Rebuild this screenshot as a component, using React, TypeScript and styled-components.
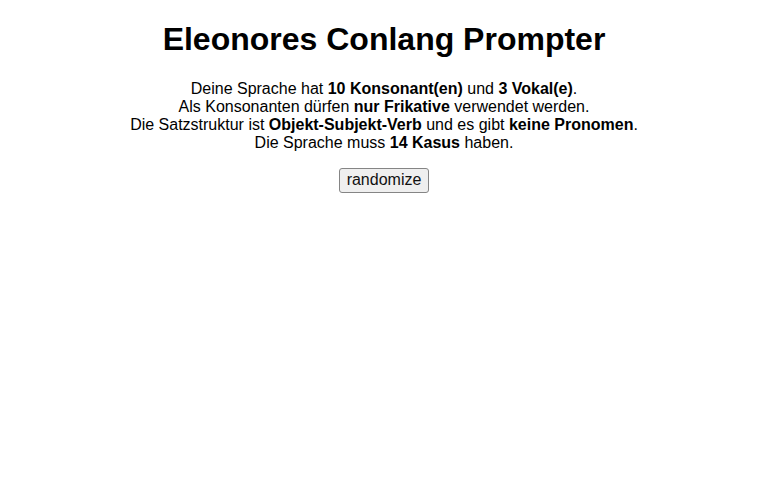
import React, { useState } from 'react';
import styled, { createGlobalStyle } from 'styled-components';

const GlobalStyle = createGlobalStyle`
  body {
    margin: 8px;
    background: #ffffff;
    color: #000000;
    font-family: "Liberation Sans", Arial, sans-serif;
  }
`;

const Container = styled.div`
  text-align: center;
`;

const Heading = styled.h1`
  font-size: 32px;
  font-weight: bold;
  margin: 13.44px 0 21.44px;
`;

const Prompt = styled.p`
  font-size: 16px;
  margin: 16px 0;
`;

const Line = styled.span`
  display: block;
`;

const RandomizeButton = styled.button`
  font-family: "Liberation Sans", Arial, sans-serif;
  font-size: 16px;
  color: #111111;
  background-color: #efefef;
  border: 1px solid #858585;
  border-radius: 3px;
  padding: 2px 7px 3px;
  cursor: pointer;
  &:hover {
    background-color: #e5e5e5;
  }
`;

const consonantTypes = ['nur Frikative', 'nur Plosive', 'nur Nasale', 'keine Frikative'];
const wordOrders = ['Subjekt-Verb-Objekt', 'Subjekt-Objekt-Verb', 'Verb-Subjekt-Objekt', 'Objekt-Subjekt-Verb'];
const pronounRules = ['keine Pronomen', 'nur ein Pronomen', 'zwölf Pronomen'];

const pick = <T,>(list: T[]) => list[Math.floor(Math.random() * list.length)];

const App = () => {
  const [prompt, setPrompt] = useState({
    consonants: 10,
    vowels: 3,
    consonantType: 'nur Frikative',
    wordOrder: 'Objekt-Subjekt-Verb',
    pronouns: 'keine Pronomen',
    cases: 14,
  });

  const randomize = () => {
    setPrompt({
      consonants: 5 + Math.floor(Math.random() * 20),
      vowels: 2 + Math.floor(Math.random() * 8),
      consonantType: pick(consonantTypes),
      wordOrder: pick(wordOrders),
      pronouns: pick(pronounRules),
      cases: Math.floor(Math.random() * 20),
    });
  };

  return (
    <Container>
      <GlobalStyle />
      <Heading>Eleonores Conlang Prompter</Heading>
      <Prompt>
        <Line>
          Deine Sprache hat <b>{prompt.consonants} Konsonant(en)</b> und <b>{prompt.vowels} Vokal(e)</b>.
        </Line>
        <Line>
          Als Konsonanten dürfen <b>{prompt.consonantType}</b> verwendet werden.
        </Line>
        <Line>
          Die Satzstruktur ist <b>{prompt.wordOrder}</b> und es gibt <b>{prompt.pronouns}</b>.
        </Line>
        <Line>
          Die Sprache muss <b>{prompt.cases} Kasus</b> haben.
        </Line>
      </Prompt>
      <RandomizeButton onClick={randomize}>randomize</RandomizeButton>
    </Container>
  );
};

export default App;
